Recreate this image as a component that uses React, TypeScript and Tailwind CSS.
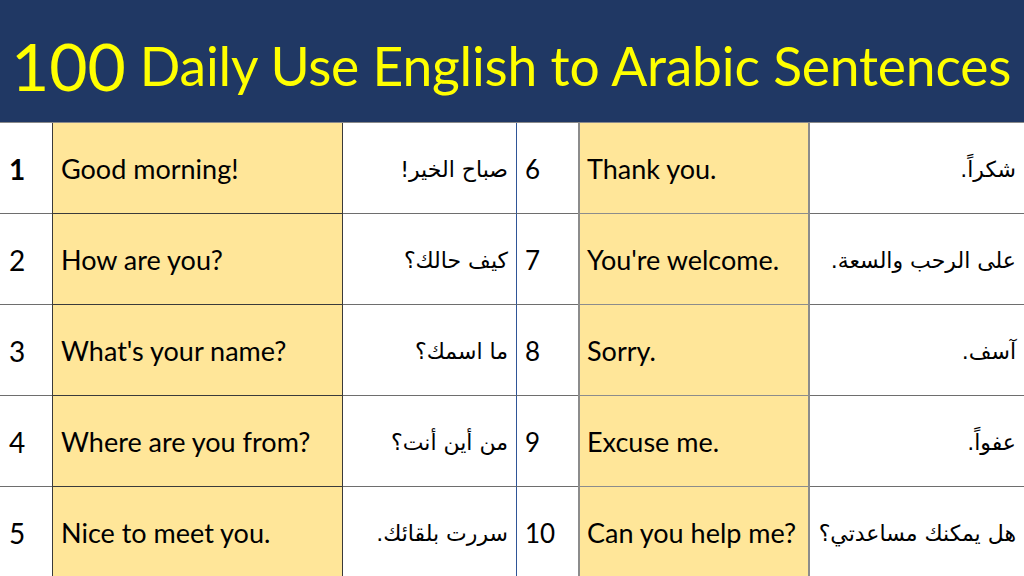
const rows: [string, string, string, string, string, string][] = [
  ['1', 'Good morning!', 'صباح الخير!', '6', 'Thank you.', 'شكراً.'],
  ['2', 'How are you?', 'كيف حالك؟', '7', "You're welcome.", 'على الرحب والسعة.'],
  ['3', "What's your name?", 'ما اسمك؟', '8', 'Sorry.', 'آسف.'],
  ['4', 'Where are you from?', 'من أين أنت؟', '9', 'Excuse me.', 'عفواً.'],
  ['5', 'Nice to meet you.', 'سررت بلقائك.', '10', 'Can you help me?', 'هل يمكنك مساعدتي؟'],
]

export default function App() {
  return (
    <div className="w-[1024px] h-[576px] overflow-hidden bg-white font-['Lato','Open_Sans',sans-serif]">
      <div className="h-[123px] bg-[#203864] flex items-center pl-[11px] pt-[10px] text-[#ffff00] whitespace-nowrap border-b border-[#8a8a8a]">
        <span className="text-[66px] leading-none mr-[14px]">100</span>
        <span className="text-[53.4px] leading-none tracking-[-0.2px]">Daily Use English to Arabic Sentences</span>
      </div>
      <div className="grid grid-cols-[52px_291px_173px_62px_232px_214px] auto-rows-[91px] text-black">
        {rows.map((r, i) => (
          <div key={i} className="contents">
            <div className={`flex items-center pl-[9px] pt-[2px] text-[28px] border-b border-[#6e6e6e] ${i === 0 ? 'font-bold' : ''}`}>{r[0]}</div>
            <div className="flex items-center pl-[8px] pt-[2px] text-[27px] bg-[#ffe699] border-l border-r border-b border-[#3a3a3a]">{r[1]}</div>
            <div dir="rtl" className="flex items-center pr-[8px] pt-[2px] text-[22px] font-['DejaVu_Sans',sans-serif] border-b border-[#6e6e6e]">{r[2]}</div>
            <div className="flex items-center pl-[8px] pt-[2px] text-[26px] border-l border-[#2f5597] border-b border-b-[#6e6e6e]">{r[3]}</div>
            <div className="flex items-center pl-[7px] pt-[2px] text-[27px] bg-[#ffe699] border-l-2 border-r-2 border-b border-[#8c8c8c]">{r[4]}</div>
            <div dir="rtl" className="flex items-center pr-[8px] pt-[2px] text-[22px] font-['DejaVu_Sans',sans-serif] border-b border-[#6e6e6e]">{r[5]}</div>
          </div>
        ))}
      </div>
    </div>
  )
}
